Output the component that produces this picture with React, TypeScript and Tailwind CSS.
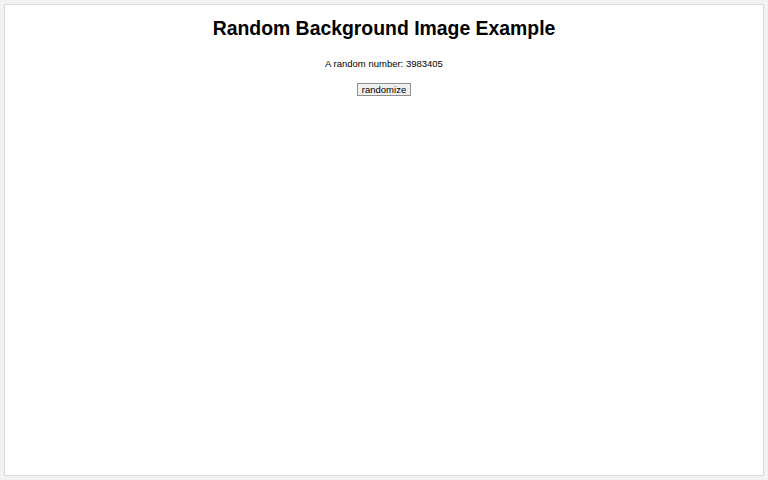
import { useState } from "react";

export default function App() {
  const [value, setValue] = useState(3983405);

  return (
    <div className="h-[480px] w-[768px] bg-[#f2f2f2] p-[4px] font-['Liberation_Sans',Arial,sans-serif] text-black">
      <div className="flex h-full flex-col items-center border border-[#dcdcdc] bg-white">
        <h1 className="mt-[11px] text-[19.4px] font-bold leading-[24px]">
          Random Background Image Example
        </h1>
        <p className="mt-[18px] text-[9.5px] leading-[12px]">
          A random number: {value}
        </p>
        <button
          className="mt-[13px] border border-[#8f8f8f] bg-[#efefef] px-[4px] text-[9.5px] leading-[11px]"
          onClick={() => setValue(Math.floor(Math.random() * 10000000))}
        >
          randomize
        </button>
      </div>
    </div>
  );
}
